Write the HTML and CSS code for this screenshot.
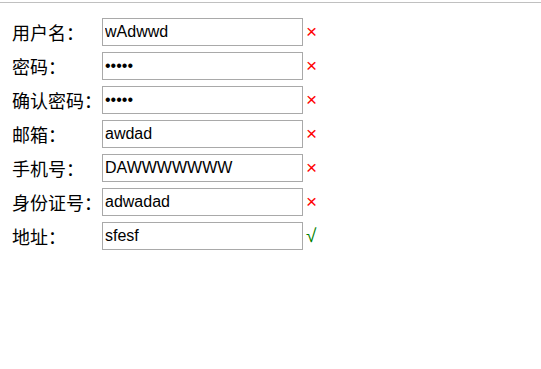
FILE: index.html
```html
<!DOCTYPE html>
<html>
<head>
<meta charset="utf-8">
<link rel="stylesheet" href="styles.css">
</head>
<body>
<div class="rule"></div>
<form class="form">
  <div class="row"><label class="lbl">用户名：</label><input class="field" type="text" value="wAdwwd"><span class="mark bad">×</span></div>
  <div class="row"><label class="lbl">密码：</label><input class="field" type="password" value="aaaaa"><span class="mark bad">×</span></div>
  <div class="row"><label class="lbl">确认密码：</label><input class="field" type="password" value="aaaaa"><span class="mark bad">×</span></div>
  <div class="row"><label class="lbl">邮箱：</label><input class="field" type="text" value="awdad"><span class="mark bad">×</span></div>
  <div class="row"><label class="lbl">手机号：</label><input class="field" type="text" value="DAWWWWWWW"><span class="mark bad">×</span></div>
  <div class="row"><label class="lbl">身份证号：</label><input class="field" type="text" value="adwadad"><span class="mark bad">×</span></div>
  <div class="row"><label class="lbl">地址：</label><input class="field" type="text" value="sfesf"><span class="mark good">√</span></div>
</form>
</body>
</html>
```
FILE: styles.css
```css
html, body {
  margin: 0;
  padding: 0;
  background: #fff;
}
body {
  font-family: "Noto Sans CJK SC", "Liberation Sans", sans-serif;
  color: #000;
}
.rule {
  margin-top: 2px;
  height: 1px;
  background: #c0c0c0;
}
.form {
  padding: 15px 0 0 12px;
  display: flex;
  flex-direction: column;
  gap: 6px;
}
.row {
  display: flex;
  align-items: center;
  height: 28px;
}
.lbl {
  width: 90px;
  flex: none;
  font-size: 18px;
  line-height: 28px;
  white-space: nowrap;
}
.field {
  box-sizing: border-box;
  width: 201px;
  height: 28px;
  margin: 0;
  border: 1px solid #a9a9a9;
  padding: 0 2px;
  font-family: "Liberation Sans", Arial, sans-serif;
  font-size: 16px;
  color: #000;
  background: #fff;
  outline: none;
}
.mark {
  margin-left: 3px;
  font-family: "Liberation Sans", "DejaVu Sans", sans-serif;
  font-size: 19px;
}
.bad { color: #f00; }
.good { color: #008000; }
```
